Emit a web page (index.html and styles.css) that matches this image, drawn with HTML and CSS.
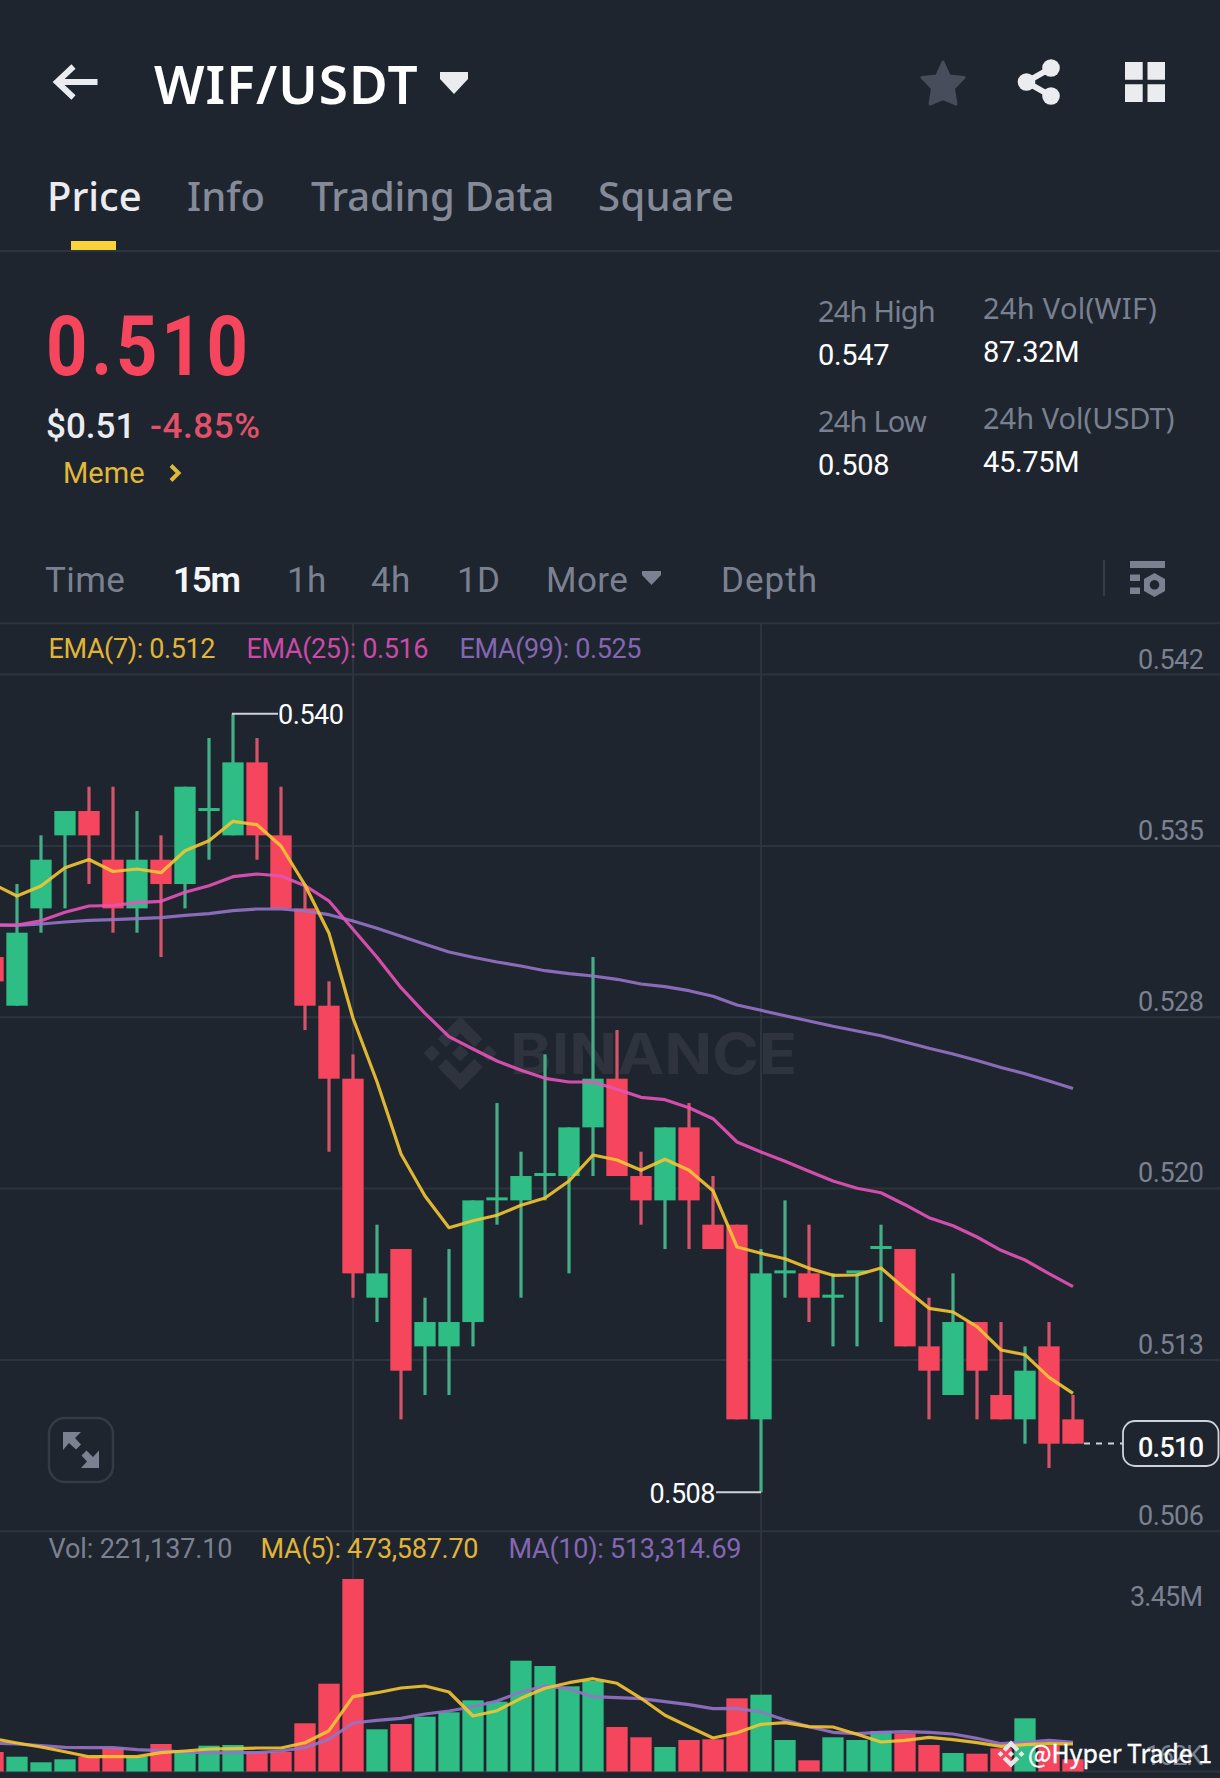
FILE: index.html
```html
<!DOCTYPE html>
<html lang="en">
<head>
  <meta charset="UTF-8">
  <title>WIF/USDT</title>
  <meta name="viewport" content="width=device-width, initial-scale=1.0">
  <link rel="stylesheet" href="styles.css">
</head>
<body>
  <header class="topbar">
    <svg class="back" width="46" height="36" viewBox="0 0 46 36">
      <path d="M21.500 2.500L5 18l16.500 15.500M5 18h40.500" fill="none" stroke="currentColor" stroke-width="6"/>
    </svg>
    <h1>WIF/USDT</h1>
    <svg class="title-arrow" width="28" height="22" viewBox="0 0 28 22"><path d="M0 0h28v7L14 22 0 7z" fill="currentColor"/></svg>
    <div class="actions">
      <svg class="star" width="46" height="46" viewBox="0 0 46 46">
        <path d="M23 2l6.300 14L44 17.500 33.500 28.500 36 44 23 38.500 10 44l2.500-15.500L2 17.500 16.700 16z" fill="currentColor" stroke="currentColor" stroke-width="3" stroke-linejoin="round"/>
      </svg>
      <svg width="44" height="46" viewBox="0 0 44 46">
        <path d="M34 9L9.500 23 34 37" fill="none" stroke="currentColor" stroke-width="6"/>
        <circle cx="34" cy="9" r="8.800" fill="currentColor"/>
        <circle cx="9.500" cy="23" r="8.800" fill="currentColor"/>
        <circle cx="34" cy="37" r="8.800" fill="currentColor"/>
      </svg>
      <svg width="40" height="40" viewBox="0 0 40 40"><path d="M0 0h17.700v17.700H0zM22.500 0h17.700v17.700H22.500zM0 22.300h17.700V40H0zM22.500 22.300h17.700V40H22.500z" fill="currentColor"/></svg>
    </div>
  </header>

  <nav class="tabs">
    <a class="tab price-tab active">Price</a>
    <a class="tab info-tab">Info</a>
    <a class="tab data-tab">Trading Data</a>
    <a class="tab square-tab">Square</a>
  </nav>

  <section class="summary">
    <div class="quote">
      <div class="last-price">0.510</div>
      <div class="change-row"><span class="fiat">$0.51</span><span class="change">-4.85%</span></div>
      <div class="tag">Meme
        <svg width="13" height="18" viewBox="0 0 13 18"><path d="M2 1.500L9.500 9 2 16.500" fill="none" stroke="currentColor" stroke-width="4"/></svg>
      </div>
    </div>
    <div class="stats">
      <div class="stat-col">
        <div class="stat"><div class="label narrow">24h High</div><div class="num">0.547</div></div>
        <div class="stat"><div class="label narrow">24h Low</div><div class="num">0.508</div></div>
      </div>
      <div class="stat-col vol">
        <div class="stat"><div class="label wide">24h Vol(WIF)</div><div class="num">87.32M</div></div>
        <div class="stat"><div class="label">24h Vol(USDT)</div><div class="num">45.75M</div></div>
      </div>
    </div>
  </section>

  <div class="intervals">
    <span>Time</span>
    <span class="active">15m</span>
    <span>1h</span>
    <span>4h</span>
    <span>1D</span>
    <span>More<svg class="more-arrow" width="19" height="14" viewBox="0 0 19 14"><path d="M0 0h19v4L9.500 14 0 4z" fill="currentColor"/></svg></span>
    <span class="depth">Depth</span>
    <i class="divider"></i>
    <svg class="settings" width="36" height="36" viewBox="0 0 36 36">
      <path d="M0 0h35v7H0zM0 13.500h10v6.500H0zM0 26.500h10V33H0z" fill="currentColor"/>
      <path fill-rule="evenodd" d="M24.500 12L35 18v12l-10.500 6L14 30V18zM24.500 19a4.800 4.800 0 1 0 .01 0z" fill="currentColor"/>
    </svg>
  </div>

  <svg id="chart" class="chart" width="1220" height="1156" viewBox="0 622 1220 1156">
    <g class="grid">
      <path d="M0 623.300H1220M0 674.500H1220M0 846H1220M0 1017.300H1220M0 1188.500H1220M0 1360H1220M0 1531.200H1220M0 1771.500H1220M353 623V1772M761 623V1772"/>
    </g>
    <g class="brand">
      <path transform="translate(423.500 1016.500) scale(.58)" d="M38.730 53.200l24.590-24.580 24.600 24.600 14.300-14.310L63.320 0 24.430 38.900zM0 63.310l14.300-14.310 14.310 14.310-14.310 14.300zM38.730 73.410L63.320 98l24.600-24.600 14.310 14.290-38.900 38.910-38.910-38.880zM98 63.310l14.300-14.310 14.310 14.300-14.310 14.320zM77.830 63.300L63.320 48.780 48.820 63.280 63.320 77.800z"/>
      <text x="510" y="1073.500" textLength="287" lengthAdjust="spacingAndGlyphs">BINANCE</text>
    </g>
    <g id="candles"></g>
    <g id="volumes"></g>
    <g id="averages" class="averages"></g>

    <g class="legend">
      <text class="yellow" x="48.500" y="658" textLength="167">EMA(7): 0.512</text>
      <text class="pink" x="246.500" y="658" textLength="182">EMA(25): 0.516</text>
      <text class="purple" x="459.500" y="658" textLength="182">EMA(99): 0.525</text>
      <text class="grey" x="48.500" y="1558" textLength="184">Vol: 221,137.10</text>
      <text class="yellow" x="260.500" y="1558" textLength="218">MA(5): 473,587.70</text>
      <text class="purple" x="508.500" y="1558" textLength="233">MA(10): 513,314.69</text>
    </g>
    <g class="axis">
      <text x="1138" y="669" textLength="66">0.542</text>
      <text x="1138" y="840" textLength="66">0.535</text>
      <text x="1138" y="1011" textLength="66">0.528</text>
      <text x="1138" y="1182" textLength="66">0.520</text>
      <text x="1138" y="1354" textLength="66">0.513</text>
      <text x="1138" y="1525" textLength="66">0.506</text>
      <text x="1130" y="1606" textLength="73">3.45M</text>
      <text x="1145" y="1765" textLength="58">162K</text>
    </g>
    <g class="marks">
      <path d="M232 713.700H278M716 1492.300H761"/>
      <path d="M1084 1443.500H1123" stroke-dasharray="6 6"/>
      <text x="278" y="724" textLength="66">0.540</text>
      <text x="649.500" y="1503" textLength="66">0.508</text>
      <rect x="1123" y="1421" width="95.500" height="45" rx="12"/>
      <text class="current" x="1138" y="1457" textLength="66">0.510</text>
    </g>
    <g class="expand">
      <rect x="49" y="1418" width="64" height="64" rx="16"/>
      <path d="M63 1432h18l-6 6 6 6.500-5 5-7-6.500-6 7zM99 1468H81l6-6.500-5.500-6 5-5 6.500 6.500 6-6.500z"/>
    </g>
    <g class="handle">
      <path transform="translate(997.500 1740.500) scale(.213)" d="M38.730 53.200l24.590-24.580 24.600 24.600 14.300-14.310L63.320 0 24.430 38.900zM0 63.310l14.300-14.310 14.310 14.310-14.310 14.300zM38.730 73.410L63.320 98l24.600-24.600 14.310 14.290-38.900 38.910-38.910-38.880zM98 63.310l14.300-14.310 14.310 14.300-14.310 14.320zM77.830 63.300L63.320 48.780 48.820 63.280 63.320 77.800z"/>
      <text x="1028" y="1763" textLength="184" lengthAdjust="spacingAndGlyphs">@Hyper Trade 1</text>
    </g>
  </svg>
  <script src="chart.js"></script>
</body>
</html>
```
FILE: styles.css
```css
html, body {
  margin: 0;
  padding: 0;
  background-color: #1e252f;
  color: #eaecef;
  font-family: Roboto, "Liberation Sans", sans-serif;
}
body {
  width: 1220px;
  height: 1778px;
  overflow: hidden;
}
svg {
  display: block;
  flex: none;
}

/* top bar */
.topbar {
  display: flex;
  align-items: center;
  height: 164px;
  padding: 0 55px 0 52px;
  box-sizing: border-box;
}
.topbar h1 {
  margin: 3px 0 0 56px;
  width: 286px;
  font-family: "Noto Sans", sans-serif;
  font-size: 53px;
  font-weight: 600;
  line-height: 60px;
  letter-spacing: 1.1px;
  color: #fff;
}
.title-arrow {
  margin-top: 2px;
}
.actions {
  display: flex;
  align-items: center;
  margin-left: auto;
}
.actions svg + svg {
  margin-left: 51px;
}
.actions svg:last-child {
  margin-left: 64px;
}
.actions .star {
  color: #474d5b;
  margin-top: 2px;
}

/* tabs */
.tabs {
  display: grid;
  grid-template-columns: 140px 124px 287px auto;
  height: 88px;
  padding-left: 47px;
  box-sizing: border-box;
  border-bottom: 2px solid #2d343f;
}
.tab {
  position: relative;
  font-family: "Noto Sans", sans-serif;
  font-size: 40px;
  font-weight: 500;
  line-height: 63px;
  color: #848a98;
}
.data-tab {
  letter-spacing: -0.2px;
}
.square-tab {
  letter-spacing: 0.4px;
}
.tab.active {
  color: #eaecef;
}
.tab.active::after {
  content: "";
  position: absolute;
  left: 24px;
  bottom: 0;
  width: 45px;
  height: 9px;
  background-color: #f8d33a;
}

/* price + 24h stats */
.summary {
  display: flex;
  justify-content: space-between;
  height: 290px;
}
.quote {
  padding: 45px 0 0 46px;
}
.last-price {
  font-size: 84px;
  font-weight: 700;
  line-height: 100px;
  letter-spacing: 4.4px;
  color: #f6465d;
  transform: scaleX(0.86);
  transform-origin: left;
}
.change-row {
  display: flex;
  font-size: 35px;
  font-weight: 500;
  line-height: 42px;
  margin-top: 9px;
}
.fiat {
  width: 104px;
}
.change {
  letter-spacing: 0.6px;
  color: #e2506a;
}
.tag {
  display: flex;
  align-items: center;
  gap: 24px;
  margin: 4px 0 0 17px;
  font-size: 29px;
  line-height: 42px;
  color: #e0b83a;
}
.stats {
  display: flex;
  padding: 37px 0 0;
}
.stat-col {
  width: 165px;
  padding-top: 3px;
}
.stat-col.vol {
  width: 237px;
  padding-top: 0;
}
.stat {
  height: 110px;
  font-size: 29px;
  line-height: 50px;
}
.label {
  font-family: "Noto Sans", sans-serif;
  font-size: 29px;
  line-height: 38px;
  color: #798090;
}
.label.narrow {
  letter-spacing: -0.8px;
}
.label.wide {
  letter-spacing: 0.3px;
}
.num {
  letter-spacing: -0.3px;
  color: #fff;
}

/* chart intervals */
.intervals {
  display: grid;
  grid-template-columns: 128px 114px 84px 86px 89px 175px 382px 27px auto;
  align-items: center;
  height: 78px;
  margin-bottom: 2px;
  padding-left: 45px;
  font-size: 35px;
  line-height: 42px;
  color: #7b8190;
}
.intervals span {
  display: flex;
  align-items: center;
  letter-spacing: 0.4px;
}
.intervals .active {
  color: #f5f6f8;
  font-weight: 600;
  letter-spacing: -1.2px;
}
.intervals .depth {
  letter-spacing: 1px;
}
.more-arrow {
  margin: -6px 0 0 14px;
}
.divider {
  width: 2px;
  height: 36px;
  margin: -6px 0 0 0;
  background-color: #353c48;
}
.settings {
  margin: -4px 0 0 0;
}

/* chart */
.chart text {
  font-size: 27px;
}
.grid path {
  fill: none;
  stroke: #2d343e;
  stroke-width: 2;
}
.brand {
  fill: #2e333d;
}
.chart .brand text {
  font-family: Inter, sans-serif;
  font-size: 56px;
  font-weight: 700;
}
.up { fill: #2ebd85; }
.down { fill: #f6465d; }
.wick.up { fill: #45ae87; }
.wick.down { fill: #d65469; }
.averages polyline {
  fill: none;
  stroke-width: 3.2;
  stroke-linejoin: round;
  opacity: 0.9;
}
.line-yellow { stroke: #f4c533; }
.line-pink { stroke: #e653b8; }
.line-purple { stroke: #9573c8; }
.yellow { fill: #e0b538; }
.pink { fill: #cb4aa8; }
.purple { fill: #8467b2; }
.grey,
.axis { fill: #7b8190; }
.marks {
  fill: #fff;
}
.marks path {
  stroke: #cfd2d8;
  stroke-width: 2;
}
.marks rect {
  fill: #1e252f;
  stroke: #cfd2d8;
  stroke-width: 1.8;
}
.marks .current {
  font-weight: 500;
}
.expand {
  fill: #7b8190;
}
.expand rect {
  fill: #1e252f;
  stroke: #343b46;
  stroke-width: 2.5;
}
.handle {
  fill: #fff;
}
.handle path {
  fill: #e8e4e8;
}
.chart .handle text {
  font-family: "Noto Sans CJK SC", sans-serif;
  font-size: 25px;
  stroke: #fff;
  stroke-width: 0.4px;
}
```
FILE: chart.js
```js
// color, open/close top, open/close bottom, high, low (ticks of 0.001 below 0.540), volume bar top
const candles = [
  ["r", 10, 11, 10, 11, 1752], ["g", 9, 12, 7, 12, 1756.7], ["g", 6, 8, 5, 9, 1762.3],
  ["g", 4, 5, 4, 8, 1759.3], ["r", 4, 5, 3, 7, 1756.7], ["r", 6, 8, 3, 9, 1748],
  ["g", 6, 8, 4, 9, 1756.7], ["r", 6, 7, 5, 10, 1744], ["g", 3, 7, 3, 8, 1751],
  ["g", 4, 4, 1, 6, 1745.7], ["g", 2, 5, 0, 5, 1745], ["r", 2, 5, 1, 6, 1752],
  ["r", 5, 8, 3, 8, 1752], ["r", 8, 12, 7, 13, 1723.3], ["r", 12, 15, 11, 18, 1683.7],
  ["r", 15, 23, 14, 24, 1579], ["g", 23, 24, 21, 25, 1729.3], ["r", 22, 27, 22, 29, 1724],
  ["g", 25, 26, 24, 28, 1716.7], ["g", 25, 26, 22, 28, 1712.3], ["g", 20, 25, 20, 26, 1700.3],
  ["g", 20, 20, 16, 21, 1701.7], ["g", 19, 20, 18, 24, 1660.7], ["g", 19, 19, 14, 20, 1666],
  ["g", 17, 19, 17, 23, 1686.3], ["g", 15, 17, 10, 19, 1681], ["r", 15, 19, 13, 19, 1727],
  ["r", 19, 20, 18, 21, 1737.3], ["g", 17, 20, 17, 22, 1747], ["r", 17, 20, 16, 22, 1740],
  ["r", 21, 22, 19, 22, 1739.3], ["r", 21, 29, 21, 29, 1698.3], ["g", 23, 29, 22, 32, 1694.7],
  ["g", 23, 23, 20, 24, 1740], ["r", 23, 24, 21, 25, 1760.3], ["g", 24, 24, 23, 26, 1737.3],
  ["g", 23, 23, 23, 26, 1740], ["g", 22, 22, 21, 25, 1731], ["r", 22, 26, 22, 26, 1733.3],
  ["r", 26, 27, 24, 29, 1745], ["g", 25, 28, 23, 28, 1753], ["r", 25, 27, 25, 29, 1753.7],
  ["r", 28, 29, 25, 29, 1748.3], ["g", 27, 29, 26, 30, 1718.3], ["r", 26, 30, 25, 31, 1745.7],
  ["r", 29, 30, 28, 30, 1759.3]
];

// y of every average, one value per candle
const averages = {
  "line-purple": [
    [925, 925.3, 924, 922, 920.3, 919.7, 918.7, 917.7, 915.3, 913.7, 910.7, 909, 909, 911, 914.7, 921, 928.3, 936.3, 944.3, 952, 957.3, 962, 966, 970.7, 973.7, 976, 979.3, 984, 986.7, 990.7, 996.3, 1005, 1010.3, 1015.7, 1021, 1026.3, 1031, 1035.7, 1042, 1048.3, 1054, 1060.5, 1067.5, 1073.7, 1081, 1088.5],
    [1743, 1744, 1745.7, 1747.3, 1747.7, 1747.7, 1749.7, 1750.7, 1752, 1753, 1752.7, 1752.7, 1751, 1747.7, 1739.3, 1723, 1720.3, 1718.3, 1714, 1711, 1706.7, 1701, 1692, 1686, 1689, 1696.7, 1697.7, 1698.7, 1701.7, 1704.7, 1708.7, 1708.3, 1712, 1720, 1726.7, 1732.3, 1733.7, 1732.3, 1731.7, 1732.3, 1734, 1738.3, 1743.7, 1742.3, 1740.3, 1742.3]
  ],
  "line-pink": [
    [925, 925, 920.7, 912.3, 906, 905.5, 902.7, 901.3, 892.3, 885.7, 876.7, 874, 876, 885.7, 901, 929.3, 957.3, 987.7, 1013.3, 1036.7, 1049, 1061, 1070.3, 1078.3, 1082, 1082, 1089.3, 1097.3, 1099.7, 1107.7, 1118.7, 1142, 1152, 1161.3, 1171.3, 1181, 1188.3, 1192.7, 1204.7, 1217.7, 1225.7, 1237, 1250.3, 1260, 1273.7, 1286.7]
  ],
  "line-yellow": [
    [884, 896, 886, 867.7, 859.5, 871.5, 869, 872.7, 850.7, 840.7, 821.3, 824.7, 846, 885, 933.3, 1018.3, 1081.7, 1154, 1196, 1227.7, 1220.7, 1215.3, 1205.3, 1198, 1181, 1155, 1160, 1170.3, 1159.3, 1170.3, 1190.7, 1247, 1253.3, 1258.7, 1268.3, 1275.3, 1275, 1268, 1288.7, 1308.3, 1312, 1326.7, 1350, 1354.7, 1377.3, 1393.3],
    [1738.5, 1743, 1747, 1751.7, 1756.7, 1756.7, 1756.7, 1752.7, 1751, 1749, 1748.7, 1748, 1748, 1742.7, 1730.7, 1696.7, 1692.7, 1688, 1686, 1692, 1716, 1710.7, 1698.3, 1688.3, 1682.7, 1678.7, 1683.3, 1698.3, 1715.3, 1726.7, 1738, 1732.7, 1724.3, 1722.7, 1726.7, 1727, 1734.3, 1742, 1740.3, 1737.3, 1739.7, 1742.7, 1746.3, 1744.7, 1743.7, 1744]
  ]
};

const STEP = 24;
const BASE = 1771.5;

function x(i) { return -7 + i * STEP; }
function y(tick) { return 713.7 + tick * 24.333; }

function add(parent, tag, attrs) {
  const el = document.createElementNS("http://www.w3.org/2000/svg", tag);
  for (const key in attrs) el.setAttribute(key, attrs[key]);
  document.getElementById(parent).appendChild(el);
}

function bar(parent, cls, cx, width, top, bottom) {
  add(parent, "rect", { class: cls, x: cx - width / 2, y: top, width: width, height: bottom - top });
}

candles.forEach(([color, top, bottom, high, low, vol], i) => {
  const cls = color === "g" ? "up" : "down";
  bar("candles", "wick " + cls, x(i), 3.2, y(high), y(low));
  // doji: flat line sitting on its price
  bar("candles", cls, x(i), 21.3, top === bottom ? y(top) - 3 : y(top), y(bottom));
  bar("volumes", cls, x(i), 21.3, vol, BASE);
});

for (const cls in averages) {
  averages[cls].forEach(values => {
    add("averages", "polyline", { class: cls, points: values.map((v, i) => x(i) + "," + v).join(" ") });
  });
}
```
